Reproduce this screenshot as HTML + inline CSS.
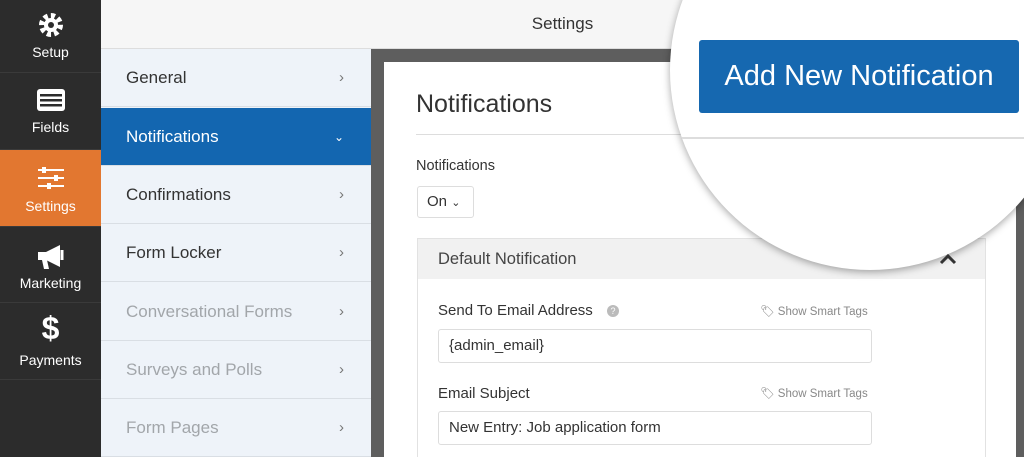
<!DOCTYPE html>
<html><head><style>
*{box-sizing:border-box;margin:0;padding:0}
html,body{width:1024px;height:457px;overflow:hidden}
body{position:relative;font-family:"Liberation Sans",sans-serif;background:#f5f5f5}
.side{position:absolute;left:0;top:0;width:101px;height:457px;background:#2c2c2c}
.si{position:absolute;left:0;width:101px;height:76px;color:#fff;font-size:14px;text-align:center;border-bottom:1px solid #3a3a3a}
.si span{position:absolute;left:0;right:0;top:45px}
.si svg{position:absolute;left:50%;transform:translateX(-50%);top:12px}
.top{position:absolute;left:101px;top:0;width:923px;height:49px;background:#f6f6f6;border-bottom:1px solid #ddd;font-size:17px;color:#333;text-align:center;line-height:48px}
.nav{position:absolute;left:101px;top:49px;width:271px;height:408px;background:#eef3f9}
.ni{position:absolute;left:0;width:271px;height:58px;border-bottom:1px solid #d9dee4;font-size:17px;color:#333;padding-left:25px;line-height:58px}
.ni.g{color:#a2a6aa}
.ni i{position:absolute;right:28px;top:0;font-style:normal;font-size:15px;color:#777}
.ni.a{background:#1366b0;color:#fff}
.main{position:absolute;left:371px;top:49px;width:653px;height:408px;background:#5e5e5e}
.pan{position:absolute;left:384px;top:62px;width:632px;height:395px;background:#fff}
.lbl{position:absolute;font-size:15px;color:#333}
.inp{position:absolute;left:438px;width:434px;height:34px;border:1px solid #ddd;border-radius:3px;font-size:15px;color:#333;padding-left:10px;line-height:32px}
.st{position:absolute;left:760px;font-size:11.5px;color:#888}
.circ{position:absolute;left:670px;top:-130px;width:400px;height:400px;border-radius:50%;background:#fff;box-shadow:0 2px 8px rgba(0,0,0,.35);overflow:hidden}
</style></head><body>
<div class="side">
 <div class="si" style="top:0;height:73px"><svg width="26" height="26" viewBox="0 0 26 26"><circle cx="13" cy="13" r="9" fill="none" stroke="#fff" stroke-width="6" stroke-dasharray="4 3"/><circle cx="13" cy="13" r="7" fill="#fff"/><circle cx="13" cy="13" r="3" fill="#2c2c2c"/></svg><span style="top:44px">Setup</span></div>
 <div class="si" style="top:74px"><svg width="30" height="24" viewBox="0 0 30 24" style="top:14px"><rect x="1" y="1" width="28" height="22" rx="3" fill="#fff"/><rect x="4" y="6" width="22" height="2.5" fill="#2c2c2c"/><rect x="4" y="11" width="22" height="2.5" fill="#2c2c2c"/><rect x="4" y="16" width="22" height="2.5" fill="#2c2c2c"/></svg><span>Fields</span></div>
 <div class="si" style="top:150px;background:#e27730;height:77px"><svg width="28" height="24" viewBox="0 0 28 24" style="top:16px"><rect x="1" y="3" width="26" height="2" fill="#fff"/><rect x="1" y="11" width="26" height="2" fill="#fff"/><rect x="1" y="19" width="26" height="2" fill="#fff"/><rect x="5" y="1" width="4" height="6" fill="#fff"/><rect x="17" y="9" width="4" height="6" fill="#fff"/><rect x="10" y="17" width="4" height="6" fill="#fff"/></svg><span style="top:48px">Settings</span></div>
 <div class="si" style="top:227px"><svg width="30" height="28" viewBox="0 0 30 28" style="top:16px"><path d="M2 9h8l14-7v22L10 17H2z" fill="#fff"/><path d="M6 17h5l2 9H8z" fill="#fff"/><path d="M26 7v10" stroke="#fff" stroke-width="3"/></svg><span style="top:48px">Marketing</span></div>
 <div class="si" style="top:304px"><span style="top:6px;font-size:32px;font-weight:bold">$</span><span style="top:48px">Payments</span></div>
</div>
<div class="top">Settings</div>
<div class="nav">
 <div class="ni" style="top:0">General<i>›</i></div>
 <div class="ni a" style="top:59px">Notifications<i style="color:#fff;font-size:12px">⌄</i></div>
 <div class="ni" style="top:117px">Confirmations<i>›</i></div>
 <div class="ni" style="top:175px">Form Locker<i>›</i></div>
 <div class="ni g" style="top:234px">Conversational Forms<i>›</i></div>
 <div class="ni g" style="top:292px">Surveys and Polls<i>›</i></div>
 <div class="ni g" style="top:350px">Form Pages<i>›</i></div>
</div>
<div class="main"></div>
<div class="pan"></div>
<div class="lbl" style="left:416px;top:90px;font-size:25px">Notifications</div>
<div style="position:absolute;left:416px;top:134px;width:600px;height:1px;background:#ddd"></div>
<div class="lbl" style="left:416px;top:158px;font-size:14.5px">Notifications</div>
<div style="position:absolute;left:417px;top:186px;width:57px;height:32px;border:1px solid #ddd;border-radius:3px;font-size:15px;color:#333;padding-left:9px;line-height:30px">On <span style="font-size:11px">⌄</span></div>
<div style="position:absolute;left:417px;top:238px;width:569px;height:230px;border:1px solid #e2e2e2"></div>
<div style="position:absolute;left:418px;top:239px;width:567px;height:40px;background:#f1f1f1;font-size:16.5px;color:#444;padding-left:20px;line-height:40px">Default Notification</div>
<div class="lbl" style="left:438px;top:302px">Send To Email Address <span style="display:inline-block;width:12px;height:12px;border-radius:50%;background:#bbb;color:#fff;font-size:9px;text-align:center;line-height:12px;margin-left:10px;vertical-align:1px">?</span></div>
<div class="st" style="top:304px">🏷 Show Smart Tags</div>
<div class="inp" style="top:329px">{admin_email}</div>
<div class="lbl" style="left:438px;top:385px">Email Subject</div>
<div class="st" style="top:386px">🏷 Show Smart Tags</div>
<div class="inp" style="top:411px">New Entry: Job application form</div>
<div class="circ">
 <div style="position:absolute;left:29px;top:170px;width:320px;height:73px;background:#1668b0;border-radius:3px;color:#fff;font-size:29px;text-align:center;line-height:73px">Add New Notification</div>
 <div style="position:absolute;left:0;top:267px;width:400px;height:2px;background:#ddd"></div>
</div>
<svg style="position:absolute;left:938px;top:253px" width="20" height="12" viewBox="0 0 20 12"><path d="M3 10l7-7 7 7" fill="none" stroke="#333" stroke-width="3"/></svg>
</body></html>
